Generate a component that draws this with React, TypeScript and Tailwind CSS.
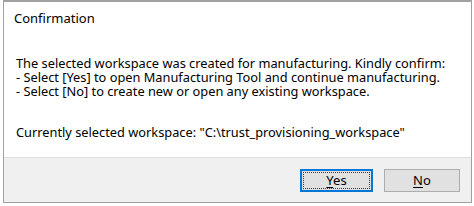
import React from "react";

const font = { fontFamily: '"Noto Sans", "Segoe UI", sans-serif' };

function DialogButton({ label, hotkey, focused }: { label: string; hotkey: string; focused?: boolean }) {
  const rest = label.slice(hotkey.length);
  return (
    <button
      type="button"
      className={`relative flex h-[23px] items-center justify-center bg-[#e1e1e1] text-[13px] text-black ${
        focused ? "w-[73px] border-2 border-[#0078d7]" : "w-[76px] border border-[#adadad]"
      }`}
    >
      {focused && <span className="absolute inset-[1px] border border-dotted border-[#3a3a3a]" />}
      <span className="relative leading-none">
        <span className="underline underline-offset-2">{hotkey}</span>
        {rest}
      </span>
    </button>
  );
}

export default function App() {
  return (
    <div className="h-[206px] w-[474px] bg-white" style={font}>
      <div className="ml-[3px] flex h-[203px] w-[469px] flex-col border-x border-t-2 border-b border-[#a0a0a0] bg-white">
        {/* Title */}
        <div className="pl-[10px] pt-[8px] text-[13px] leading-[16px] text-black">Confirmation</div>

        {/* Message */}
        <div className="flex-1 pl-[12px] pt-[30px] text-[12.8px] leading-[14px] text-black">
          <div>The selected workspace was created for manufacturing. Kindly confirm:</div>
          <div>- Select [Yes] to open Manufacturing Tool and continue manufacturing.</div>
          <div>- Select [No] to create new or open any existing workspace.</div>
          <div className="pt-[27px]">Currently selected workspace: "C:\trust_provisioning_workspace"</div>
        </div>

        {/* Footer */}
        <div className="flex h-[45px] items-start justify-end gap-[11px] border-t border-[#dfdfdf] bg-[#f0f0f0] pr-[11px] pt-[11px]">
          <DialogButton label="Yes" hotkey="Y" focused />
          <DialogButton label="No" hotkey="N" />
        </div>
      </div>
    </div>
  );
}
